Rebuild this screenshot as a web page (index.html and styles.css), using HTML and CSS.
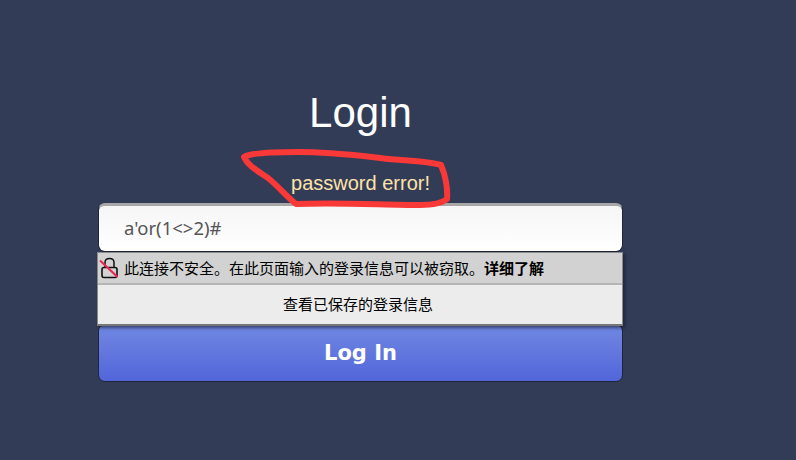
FILE: index.html
```html
<!DOCTYPE html>
<html>
<head>
  <meta charset="utf-8">
  <title>Login</title>
  <link rel="stylesheet" href="styles.css">
</head>
<body>
  <div class="login">
    <h1 class="title">Login</h1>
    <p class="error">password error!</p>
    <form class="form">
      <input type="text" class="input" value="a'or(1&lt;&gt;2)#">
      <button type="button" class="button">Log In</button>

      <!-- browser autofill popup -->
      <div class="popup">
        <div class="popup-warning">
          <svg class="lock" width="20" height="22" viewBox="0 0 20 22">
            <path d="M7 10V5.500C7 3 9 1.500 11.500 1.500S16 3 16 5.500V10" fill="none" stroke="#111" stroke-width="1.500"/>
            <path d="M6 10.500H17Q19 10.500 19 12.500V18.500Q19 20.500 17 20.500H6Q4 20.500 4 18.500V12.500Q4 10.500 6 10.500Z" fill="none" stroke="#111" stroke-width="1.600"/>
            <path d="M2 3.500L19.500 20" stroke="#ee2450" stroke-width="2"/>
          </svg>
          <span>此连接不安全。在此页面输入的登录信息可以被窃取。<b>详细了解</b></span>
        </div>
        <div class="popup-saved">查看已保存的登录信息</div>
      </div>
    </form>

    <!-- red marker drawn over the screenshot -->
    <svg class="scribble" width="796" height="220" viewBox="0 0 796 220">
      <path d="M244 157C250 153 272 152 298 152C322 152 345 154 372 157C398 161 424 160 441 165C445 174 448 188 447 199C441 204 432 205 420 205C385 205 335 202 296 204C287 197 278 186 268 178C258 171 248 166 244 157Z" fill="none" stroke="#f93838" stroke-width="6" stroke-linejoin="round"/>
    </svg>
  </div>
</body>
</html>
```

FILE: styles.css
```css
* {
  box-sizing: border-box;
}

body {
  margin: 0;
  height: 460px;
  overflow: hidden;
  background: #323c57;
  font-family: 'Liberation Sans', Arial, sans-serif;
}

.login {
  width: 525px;
  margin-left: 98px;
  padding-top: 88px;
}

.title {
  margin: 0;
  font-size: 42px;
  font-weight: 400;
  line-height: 50px;
  text-align: center;
  color: #fff;
}

.error {
  margin: 33px 0 0 0;
  font-size: 20px;
  line-height: 24px;
  text-align: center;
  color: #fde3a7;
}

.form {
  position: relative;
  margin-top: 8px;
}

.input {
  display: block;
  width: 100%;
  height: 49px;
  padding: 0 25px 2px 25px;
  border: 1px solid #20263a;
  border-top: 3px solid #a8a8a8;
  border-radius: 7px;
  outline: none;
  background: linear-gradient(#f6f6f6, #fff);
  font-family: 'Noto Sans', sans-serif;
  font-size: 18.5px;
  color: #555;
}

.button {
  display: block;
  width: 100%;
  height: 58px;
  margin-top: 72px;
  border: 1px solid #20263a;
  border-radius: 7px;
  background: linear-gradient(#7088e2, #5266da);
  font-family: 'DejaVu Sans', sans-serif;
  font-size: 21px;
  font-weight: 700;
  color: #fff;
}

.popup {
  position: absolute;
  top: 49px;
  left: -1px;
  width: 526px;
  border: 1px solid #8a8a8a;
  border-bottom: 2px solid #777;
  box-shadow: 2px 2px 3px rgba(20, 24, 40, 0.6);
  font-family: 'Noto Sans CJK SC', sans-serif;
  font-size: 15px;
  color: #000;
}

.popup-warning {
  display: flex;
  align-items: center;
  gap: 6px;
  height: 32px;
  border-bottom: 2px solid #b5b5b5;
  background: #d2d2d2;
}

.popup-warning span {
  padding-bottom: 2px;
}

.lock {
  flex: none;
}

.popup-saved {
  height: 39px;
  padding-right: 4px;
  line-height: 37px;
  text-align: center;
  background: #ececec;
}

.scribble {
  position: absolute;
  top: 0;
  left: 0;
}
```
